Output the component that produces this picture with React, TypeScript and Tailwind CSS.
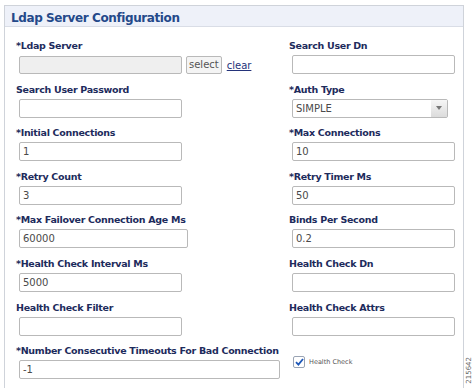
import React from "react";

const labelCls =
  "block font-bold text-[#1d2b5c] text-[9.5px] tracking-[-0.3px] leading-[12px] whitespace-nowrap";
const inputCls =
  "block h-[19px] border border-[#b9b9b9] rounded-[2px] bg-white px-[3px] text-[10px] leading-[17px] text-[#4a4a4a]";

function Field({
  label,
  value,
  width = "w-[163px]",
}: {
  label: string;
  value?: string;
  width?: string;
}) {
  return (
    <div className="h-[43.6px]">
      <span className={labelCls}>{label}</span>
      <div className={`${inputCls} ${width} ml-[3px] mt-[3px]`}>{value}</div>
    </div>
  );
}

export default function App() {
  return (
    <div
      className="w-[474px] h-[388px] bg-white flex overflow-hidden"
      style={{ fontFamily: '"DejaVu Sans", Verdana, sans-serif' }}
    >
      <div className="ml-[4px] mt-[5px] w-[460px] border-l border-r border-t border-[#cfd3da] flex flex-col">
        <div className="h-[27px] bg-[#eef1f9] border-b border-[#d9dde6] pl-[6px] pt-[5px]">
          <h1 className="text-[12px] tracking-[-0.4px] font-bold text-[#24498a] leading-[15px]">
            Ldap Server Configuration
          </h1>
        </div>

        <div className="grid grid-cols-[273px_1fr] pl-[11px] pt-[13px]">
          <div className="h-[43.6px]">
            <span className={labelCls}>*Ldap Server</span>
            <div className="flex items-center gap-[4px] mt-[4px] ml-[3px]">
              <div className="h-[18px] w-[163px] border border-[#b9b9b9] rounded-[2px] bg-[#efefef]" />
              <div className="h-[18px] px-[2px] border border-[#b9b9b9] rounded-[2px] bg-[#f4f4f4] text-[10px] leading-[16px] text-[#555]">
                select
              </div>
              <span className="text-[10px] text-[#24337a] underline ml-[1px]">clear</span>
            </div>
          </div>
          <Field label="Search User Dn" />

          <Field label="Search User Password" />
          <div className="h-[43.6px]">
            <span className={labelCls}>*Auth Type</span>
            <div className="mt-[3px] ml-[3px] h-[19px] w-[156px] border border-[#b9b9b9] rounded-[2px] bg-white flex items-center justify-between text-[10px] text-[#4a4a4a] pl-[3px]">
              <span>SIMPLE</span>
              <span className="h-full w-[16px] bg-gradient-to-b from-[#f6f6f6] to-[#dcdcdc] flex items-center justify-center">
                <svg width="6" height="4" viewBox="0 0 6 4">
                  <path d="M0 0h6L3 4z" fill="#777" />
                </svg>
              </span>
            </div>
          </div>

          <Field label="*Initial Connections" value="1" />
          <Field label="*Max Connections" value="10" />

          <Field label="*Retry Count" value="3" />
          <Field label="*Retry Timer Ms" value="50" />

          <Field label="*Max Failover Connection Age Ms" value="60000" width="w-[169px]" />
          <Field label="Binds Per Second" value="0.2" />

          <Field label="*Health Check Interval Ms" value="5000" />
          <Field label="Health Check Dn" />

          <Field label="Health Check Filter" />
          <Field label="Health Check Attrs" />

          <Field
            label="*Number Consecutive Timeouts For Bad Connection"
            value="-1"
            width="w-[261px]"
          />
          <div className="flex items-start gap-[4px] ml-[4px] mt-[11px]">
            <div className="w-[12px] h-[12px] border border-[#9aa4b4] rounded-[2px] bg-white flex items-center justify-center">
              <svg width="9" height="8" viewBox="0 0 9 8">
                <path d="M1 4.2 3.4 6.6 8 1" fill="none" stroke="#1f58b8" strokeWidth="1.8" />
              </svg>
            </div>
            <span className="text-[6.5px] leading-[12px] text-[#555]">Health Check</span>
          </div>
        </div>
      </div>

      <div className="flex-1 flex items-end justify-center pb-[4px]">
        <span className="text-[7px] text-[#666] [writing-mode:vertical-rl] rotate-180 leading-none">
          215642
        </span>
      </div>
    </div>
  );
}
